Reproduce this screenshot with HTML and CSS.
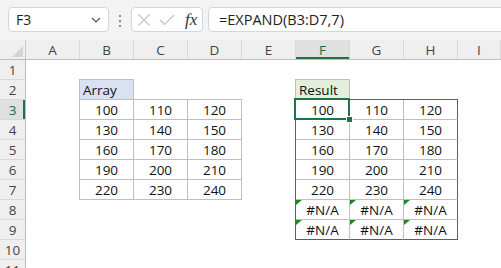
FILE: index.html
```html
<!DOCTYPE html>
<html>
<head>
    <title>EXPAND</title>
    <link rel="stylesheet" href="styles.css">
</head>
<body>
    <div class="bar">
        <div class="namebox">
            <span>F3</span>
            <svg width="10" height="6" viewBox="0 0 10 6"><path d="M1 1 L5 5 L9 1" fill="none" stroke="#555" stroke-width="1.2"/></svg>
        </div>
        <div class="grip"><i></i><i></i><i></i></div>
        <div class="fxbox">
            <svg width="14" height="12" viewBox="0 0 14 12"><path d="M1.5 0.5 L12.5 11.5 M12.5 0.5 L1.5 11.5" stroke="#c4c4c4" stroke-width="1.2"/></svg>
            <svg width="16" height="12" viewBox="0 0 16 12"><path d="M1 6 L5.5 10.5 L15 1" fill="none" stroke="#c4c4c4" stroke-width="1.2"/></svg>
            <span class="fx">fx</span>
        </div>
        <div class="formula">=EXPAND(B3:D7,7)</div>
    </div>

    <div class="sheet">
        <div class="corner"></div>
        <div class="cols">
            <div>A</div><div>B</div><div>C</div><div>D</div><div>E</div>
            <div class="sel">F</div><div>G</div><div>H</div><div>I</div>
        </div>
        <div class="rows">
            <div>1</div><div>2</div><div class="sel">3</div><div>4</div><div>5</div><div>6</div>
            <div>7</div><div>8</div><div>9</div><div>10</div><div>11</div>
        </div>
        <div class="cells">
            <div class="label array">Array</div>
            <div class="range">
                <div>100</div><div>110</div><div>120</div>
                <div>130</div><div>140</div><div>150</div>
                <div>160</div><div>170</div><div>180</div>
                <div>190</div><div>200</div><div>210</div>
                <div>220</div><div>230</div><div>240</div>
            </div>

            <div class="label result">Result</div>
            <div class="range spill">
                <div class="active">100</div><div>110</div><div>120</div>
                <div>130</div><div>140</div><div>150</div>
                <div>160</div><div>170</div><div>180</div>
                <div>190</div><div>200</div><div>210</div>
                <div>220</div><div>230</div><div>240</div>
                <div class="err">#N/A</div><div class="err">#N/A</div><div class="err">#N/A</div>
                <div class="err">#N/A</div><div class="err">#N/A</div><div class="err">#N/A</div>
            </div>
        </div>
    </div>
</body>
</html>
```

FILE: styles.css
```css
body{
    margin: 0;
    font-family: "Open Sans", "Liberation Sans", sans-serif;
    background: #fff;
    overflow: hidden;
}
/*=======Formula bar=======*/
.bar{
    height: 40px;
    box-sizing: border-box;
    padding: 7px 0 0 8px;
    background: #f3f3f3;
    display: flex;
    align-items: flex-start;
}
.namebox, .fxbox, .formula{
    height: 25px;
    box-sizing: border-box;
    background: #fff;
    border: 1px solid #d6d6d6;
    border-radius: 4px;
    display: flex;
    align-items: center;
}
.namebox{
    width: 101px;
    padding: 0 7px 0 7px;
    justify-content: space-between;
    font-size: 14px;
    color: #222;
}
.grip{
    width: 2px;
    margin: 8px 10px 0 10px;
    display: flex;
    flex-direction: column;
    gap: 3px;
}
.grip i{
    width: 2px;
    height: 2px;
    background: #8a8a8a;
}
.fxbox{
    width: 72px;
    padding: 0 4px 0 5px;
    gap: 8px;
}
.fx{
    font-family: "Liberation Serif", serif;
    font-style: italic;
    font-size: 17px;
    color: #333;
    margin-left: 2px;
}
.formula{
    flex: 1;
    margin-left: 5px;
    margin-right: -10px;
    padding-left: 10px;
    font-size: 14.5px;
    color: #222;
}
/*=======Sheet=======*/
.sheet{
    display: grid;
    grid-template-columns: 26px 1fr;
    grid-template-rows: 20px 1fr;
}
.corner{
    background: #efefef;
    border-right: 1px solid #c8c8c8;
    border-bottom: 1px solid #bdbdbd;
    box-sizing: border-box;
    position: relative;
}
.corner::after{
    content: "";
    position: absolute;
    right: 2px;
    bottom: 2px;
    border-left: 11px solid transparent;
    border-bottom: 11px solid #d4d4d4;
}
.cols{
    display: grid;
    grid-template-columns: repeat(8, 54px) 1fr;
    background: #efefef;
    border-bottom: 1px solid #bdbdbd;
    box-sizing: border-box;
}
.cols div, .rows div{
    box-sizing: border-box;
    display: flex;
    justify-content: center;
    align-items: center;
    font-size: 13.5px;
    color: #444;
}
.cols div{
    border-right: 1px solid #d8d8d8;
}
.cols .sel{
    background: #e0e0e0;
    color: #1e6b40;
    box-shadow: inset 0 -2px 0 #217346;
}
.rows{
    display: grid;
    grid-template-rows: repeat(11, 20px);
    background: #efefef;
    border-right: 1px solid #bdbdbd;
}
.rows div{
    border-bottom: 1px solid #d8d8d8;
}
.rows .sel{
    background: #e0e0e0;
    color: #1e6b40;
    box-shadow: inset -2px 0 0 #217346;
}
.cells{
    display: grid;
    grid-template-columns: repeat(8, 54px) 1fr;
    grid-template-rows: repeat(11, 20px);
    font-size: 13.5px;
    color: #111;
}
.label{
    grid-row: 2;
    margin: -1px 0 0 -1px;
    border: 1px solid #bfbfbf;
    padding: 0 0 0 3px;
    display: flex;
    align-items: flex-end;
    line-height: 18px;
}
.label.array{
    grid-column: 2;
    background: #d9e1f2;
}
.label.result{
    grid-column: 6;
    background: #e2efda;
}
.range{
    grid-column: 2 / span 3;
    grid-row: 3 / span 5;
    margin: -1px 0 0 -1px;
    border-left: 1px solid #bfbfbf;
    border-top: 1px solid #bfbfbf;
    display: grid;
    grid-template-columns: repeat(3, 54px);
    grid-auto-rows: 20px;
}
.range div{
    box-sizing: border-box;
    border-right: 1px solid #bfbfbf;
    border-bottom: 1px solid #bfbfbf;
    display: flex;
    justify-content: center;
    align-items: flex-end;
    line-height: 18px;
    position: relative;
}
.range.spill{
    grid-column: 6 / span 3;
    grid-row: 3 / span 7;
    border-left-color: #3a62b0;
    border-top-color: #3a62b0;
}
.spill div:nth-child(3n){
    border-right-color: #3a62b0;
}
.spill div:nth-last-child(-n+3){
    border-bottom-color: #3a62b0;
}
.err::before{
    content: "";
    position: absolute;
    top: 0;
    left: 0;
    border-top: 5px solid #1a8a1a;
    border-right: 6px solid transparent;
}
.active::after{
    content: "";
    position: absolute;
    top: -2px;
    left: -2px;
    right: -1px;
    bottom: -1px;
    border: 2px solid #217346;
}
.active::before{
    content: "";
    position: absolute;
    right: -4px;
    bottom: -4px;
    width: 5px;
    height: 5px;
    background: #217346;
    border: 1px solid #fff;
    z-index: 1;
}
```
